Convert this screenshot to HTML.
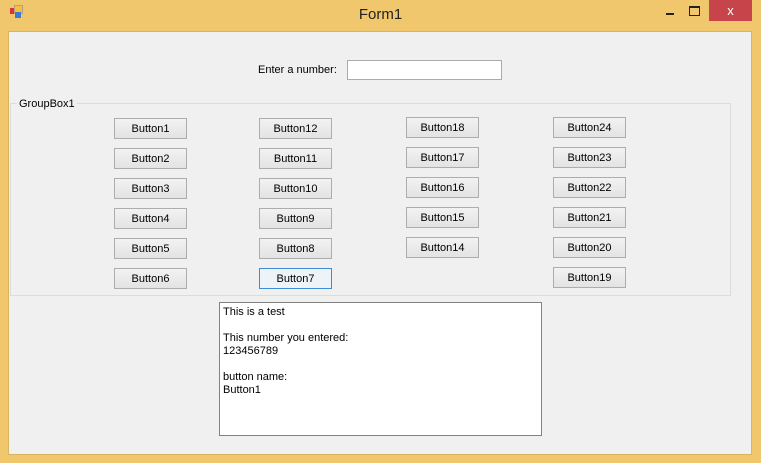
<!DOCTYPE html><html><head><style>
body{margin:0;width:761px;height:463px;background:#F0C76C;position:relative;overflow:hidden;font-family:"Liberation Sans",sans-serif;font-size:11px;color:#000}
.a{position:absolute}
.client{left:8px;top:31px;width:744px;height:424px;background:#F0F0F0;border:1px solid #D9B45E;box-sizing:border-box}
.b{position:absolute;width:73px;height:21px;box-sizing:border-box;border:1px solid #ADADAD;background:linear-gradient(#F2F2F2,#E3E3E3);text-align:center;line-height:20px;font-size:11px}
</style></head><body>
<div class="a" style="left:10px;top:8px;width:6px;height:6px;background:#D33"></div>
<div class="a" style="left:14px;top:5px;width:7px;height:7px;background:#F4C23A;border:1px solid #B98"></div>
<div class="a" style="left:15px;top:12px;width:6px;height:6px;background:#3A7BD5"></div>
<div class="a" style="left:0;top:6px;width:761px;text-align:center;font-size:15px;color:#222">Form1</div>
<div class="a" style="left:666px;top:13px;width:8px;height:2px;background:#222"></div>
<div class="a" style="left:689px;top:6px;width:9px;height:7px;border:1px solid #222;border-top-width:2px"></div>
<div class="a" style="left:709px;top:0;width:43px;height:21px;background:#C7444A;color:#fff;text-align:center;line-height:21px;font-size:13px">x</div>
<div class="a client"></div>
<div class="a" style="left:258px;top:64px">Enter a number:</div>
<div class="a" style="left:347px;top:60px;width:155px;height:20px;box-sizing:border-box;border:1px solid #ABABAB;background:#fff"></div>
<div class="a" style="left:10px;top:103px;width:721px;height:193px;box-sizing:border-box;border:1px solid #DCDCDC"></div>
<div class="a" style="left:17px;top:98px;background:#F0F0F0;padding:0 2px">GroupBox1</div>
<div class="b" style="left:114px;top:118px">Button1</div>
<div class="b" style="left:114px;top:148px">Button2</div>
<div class="b" style="left:114px;top:178px">Button3</div>
<div class="b" style="left:114px;top:208px">Button4</div>
<div class="b" style="left:114px;top:238px">Button5</div>
<div class="b" style="left:114px;top:268px">Button6</div>
<div class="b" style="left:259px;top:118px">Button12</div>
<div class="b" style="left:259px;top:148px">Button11</div>
<div class="b" style="left:259px;top:178px">Button10</div>
<div class="b" style="left:259px;top:208px">Button9</div>
<div class="b" style="left:259px;top:238px">Button8</div>
<div class="b" style="left:259px;top:268px;border-color:#3C8CD8;background:#EEF3F8">Button7</div>
<div class="b" style="left:406px;top:117px">Button18</div>
<div class="b" style="left:406px;top:147px">Button17</div>
<div class="b" style="left:406px;top:177px">Button16</div>
<div class="b" style="left:406px;top:207px">Button15</div>
<div class="b" style="left:406px;top:237px">Button14</div>
<div class="b" style="left:553px;top:117px">Button24</div>
<div class="b" style="left:553px;top:147px">Button23</div>
<div class="b" style="left:553px;top:177px">Button22</div>
<div class="b" style="left:553px;top:207px">Button21</div>
<div class="b" style="left:553px;top:237px">Button20</div>
<div class="b" style="left:553px;top:267px">Button19</div>
<div class="a" style="left:219px;top:302px;width:323px;height:134px;box-sizing:border-box;border:1px solid #828282;background:#fff;padding:3px 3px;line-height:13px">This is a test<br><br>This number you entered:<br>123456789<br><br>button name:<br>Button1</div>
</body></html>
